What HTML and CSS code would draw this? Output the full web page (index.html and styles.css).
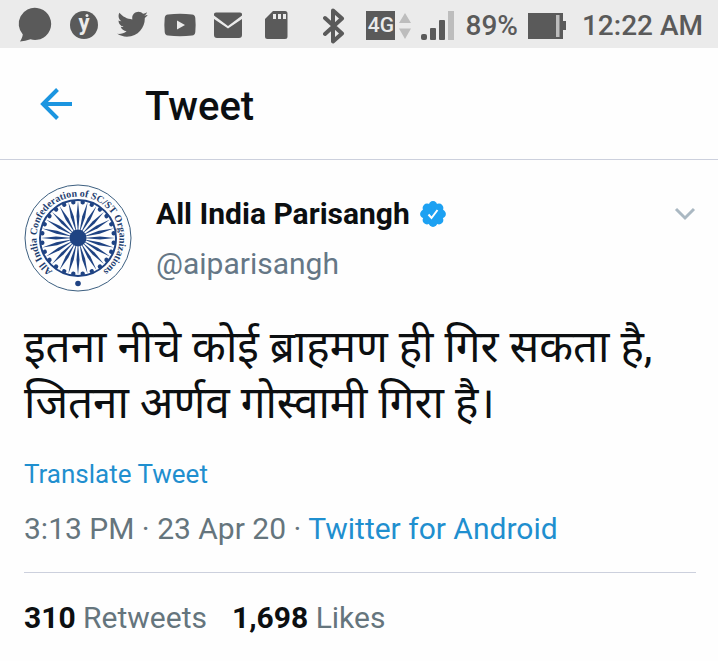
FILE: index.html
```html
<!DOCTYPE html>
<html lang="en">
<head>
  <meta charset="UTF-8">
  <meta name="viewport" content="width=device-width, initial-scale=1.0">
  <title>Tweet</title>
  <link rel="stylesheet" href="styles.css">
</head>
<body>
  <div class="status">
    <div class="notifications">
      <svg class="notif" viewBox="0 0 34 34"><path d="M18 1a16 16 0 1 1-6.500 31.200C8 33.400 4.500 34 1 34.500c1.500-2.300 2.500-4.500 2.800-7A16 16 0 0 1 18 1z"/></svg>
      <svg class="notif" viewBox="0 0 34 34"><circle cx="17" cy="18" r="14"/><text class="yletter" x="17" y="23" text-anchor="middle">y</text><circle class="dot" cx="20" cy="8.500" r="1.500"/></svg>
      <svg class="notif" viewBox="0 0 34 34"><g transform="translate(1 1) scale(1.350)"><path d="M23.643 4.937c-.835.37-1.732.62-2.675.733.962-.576 1.700-1.490 2.048-2.578-.9.534-1.897.922-2.958 1.130-.85-.904-2.060-1.470-3.400-1.470-2.572 0-4.658 2.086-4.658 4.660 0 .364.042.718.120 1.060-3.873-.195-7.304-2.050-9.602-4.868-.4.690-.63 1.490-.63 2.342 0 1.616.823 3.043 2.072 3.878-.764-.025-1.482-.234-2.110-.583v.060c0 2.257 1.605 4.140 3.737 4.568-.392.106-.803.162-1.227.162-.3 0-.593-.028-.877-.082.593 1.850 2.313 3.198 4.352 3.234-1.595 1.250-3.604 1.995-5.786 1.995-.376 0-.747-.022-1.112-.065 2.062 1.323 4.510 2.093 7.140 2.093 8.570 0 13.255-7.098 13.255-13.254 0-.2-.005-.402-.014-.602.910-.658 1.700-1.477 2.323-2.410z"/></g></svg>
      <svg class="notif" viewBox="0 0 34 34"><path fill-rule="evenodd" d="M5 7.500Q17 6.200 29 7.500Q32 7.800 32.300 11Q33 18 32.300 25Q32 28.200 29 28.500Q17 29.800 5 28.500Q2 28.200 1.700 25Q1 18 1.700 11Q2 7.800 5 7.500zM14 13.500v9l8-4.500z"/></svg>
      <svg class="notif" viewBox="0 0 34 34"><path d="M5 5.500h24q2 0 2 1.500v1.500L17 19 3 8.500V7q0-1.500 2-1.500zM3 12l14 9.500L31 12v16q0 3-3 3H6q-3 0-3-3z"/></svg>
      <svg class="notif" viewBox="0 0 34 34"><path fill-rule="evenodd" d="M14 4h12q2.500 0 2.500 2.500v23q0 2.500-2.500 2.500H8.500Q6 32 6 29.500V12zM14 7v5h3V7zM19 7v5h3V7zM24 7v5h3V7z"/></svg>
    </div>
    <div class="system">
      <svg class="bluetooth" viewBox="0 0 22 36"><path d="M2 10l17 15.500-9 8V2.500l9 8L2 26"/></svg>
      <span class="network">4G</span>
      <svg class="traffic" viewBox="0 0 12 26"><path d="M6 0l6 10H0zM0 15.500h12L6 26z"/></svg>
      <svg class="signal" viewBox="0 0 34 30"><rect x="0" y="23" width="6" height="6" rx="2"/><rect x="9" y="17" width="6" height="12" rx="1"/><rect x="18" y="9" width="6" height="20" rx="1"/><rect class="off" x="27" y="0" width="6" height="29"/></svg>
      <span class="percent">89%</span>
      <svg class="battery" viewBox="0 0 38 26"><path d="M0 0h35v8h3v9h-3v9H0z"/><path class="gap" d="M28 2h3.500v22H28z"/></svg>
      <span class="clock">12:22 AM</span>
    </div>
  </div>

  <header class="topbar">
    <button class="back" aria-label="Back">
      <svg viewBox="0 0 32 32"><path d="M32 16H2.500M17.500 1.500L3 16l14.500 14.500"/></svg>
    </button>
    <h1>Tweet</h1>
  </header>

  <main class="tweet">
    <div class="author">
      <svg class="avatar" viewBox="-54 -54 108 108">
        <defs>
          <path id="ring" d="M0 41.500A41.500 41.500 0 0 1 0-41.500A41.500 41.500 0 0 1 0 41.500"/>
          <g id="spoke">
            <path d="M-.3-8L-1.500-22L0-37L1.500-22L.3-8z"/>
            <circle cx="0" cy="-36" r="2.200" transform="rotate(7.500)"/>
          </g>
          <g id="quarter">
            <use href="#spoke"/>
            <use href="#spoke" transform="rotate(15)"/>
            <use href="#spoke" transform="rotate(30)"/>
            <use href="#spoke" transform="rotate(45)"/>
            <use href="#spoke" transform="rotate(60)"/>
            <use href="#spoke" transform="rotate(75)"/>
          </g>
        </defs>
        <circle class="edge" r="53"/>
        <circle class="rim" r="38"/>
        <circle r="8.500"/>
        <use href="#quarter"/>
        <use href="#quarter" transform="rotate(90)"/>
        <use href="#quarter" transform="rotate(180)"/>
        <use href="#quarter" transform="rotate(270)"/>
        <circle cx="0" cy="45.500" r="2.800"/>
        <text class="motto" text-anchor="middle"><textPath href="#ring" startOffset="50%">All India Confederation of SC/ST Organizations</textPath></text>
      </svg>
      <div class="names">
        <div class="name">All India Parisangh
          <svg class="verified" viewBox="0 0 26 26"><g><circle cx="13" cy="13" r="9.500"/><circle cx="13" cy="4.500" r="4.400"/><circle cx="19" cy="7" r="4.400"/><circle cx="21.500" cy="13" r="4.400"/><circle cx="19" cy="19" r="4.400"/><circle cx="13" cy="21.500" r="4.400"/><circle cx="7" cy="19" r="4.400"/><circle cx="4.500" cy="13" r="4.400"/><circle cx="7" cy="7" r="4.400"/></g><path d="M8.500 13.500l3 3.500 6-8"/></svg>
        </div>
        <div class="handle">@aiparisangh</div>
      </div>
      <button class="more" aria-label="More">
        <svg viewBox="0 0 22 14"><path d="M2 2l9 9 9-9"/></svg>
      </button>
    </div>

    <p class="text" lang="hi">इतना नीचे कोई ब्राहमण ही गिर सकता है, जितना अर्णव गोस्वामी गिरा है।</p>

    <a class="translate" href="#">Translate Tweet</a>
    <p class="meta">3:13 PM · 23 Apr 20 · <a href="#">Twitter for Android</a></p>

    <div class="stats">
      <span><b>310</b> Retweets</span>
      <span><b>1,698</b> Likes</span>
    </div>
  </main>
</body>
</html>
```

FILE: styles.css
```css
body {
  margin: 0;
  background: #fefefe;
  color: #0c0f11;
  font-family: Roboto, "Noto Sans", sans-serif;
  font-size: 30px;
}
h1, p {
  margin: 0;
}
a {
  color: #1f8fcf;
  text-decoration: none;
}
button {
  padding: 0;
  border: 0;
  background: none;
}
svg {
  display: block;
  flex: none;
}

/* status bar */
.status {
  display: flex;
  justify-content: space-between;
  align-items: center;
  height: 48px;
  padding: 0 15px 0 19px;
  background: #ebebeb;
  color: #5a5a5a;
  fill: #5a5a5a;
  font-size: 28px;
  font-weight: 500;
  line-height: 48px;
}
.notifications {
  display: flex;
  gap: 14px;
}
.notif {
  width: 34px;
  height: 34px;
  overflow: visible;
}
.yletter {
  fill: #ebebeb;
  font-size: 22px;
  font-weight: 700;
}
.notif .dot {
  fill: #ebebeb;
}
.system {
  display: flex;
  align-items: center;
  gap: 10px;
  padding-top: 3px;
}
.bluetooth {
  width: 22px;
  height: 36px;
  margin-right: 11px;
  fill: none;
  stroke: #5a5a5a;
  stroke-width: 4;
  stroke-linejoin: round;
  stroke-linecap: round;
}
.network {
  width: 29px;
  line-height: 29px;
  margin-right: -6px;
  background: #5a5a5a;
  color: #ebebeb;
  font-size: 21px;
  text-align: center;
}
.traffic {
  width: 12px;
  height: 26px;
  fill: #bdbdbd;
}
.signal {
  width: 34px;
  height: 30px;
}
.signal .off {
  fill: #bdbdbd;
}
.battery {
  width: 38px;
  height: 26px;
}
.battery .gap {
  fill: #bdbdbd;
}
.clock {
  margin-left: 6px;
}

/* top bar */
.topbar {
  display: flex;
  align-items: center;
  gap: 73px;
  height: 111px;
  padding: 0 40px;
  border-bottom: 1px solid #ccd0dd;
}
.back svg {
  width: 32px;
  height: 32px;
  fill: none;
  stroke: #1b95e0;
  stroke-width: 4;
}
.topbar h1 {
  padding-top: 6px;
  font-size: 40px;
  font-weight: 500;
}

/* tweet */
.tweet {
  padding: 24px 22px 24px 24px;
}
.author {
  display: flex;
  align-items: flex-start;
  gap: 24px;
}
.avatar {
  width: 108px;
  height: 108px;
  fill: #1f4383;
}
.avatar .edge {
  fill: none;
  stroke: #3c5f80;
  stroke-width: 1;
}
.avatar .rim {
  fill: none;
  stroke: #1f4383;
  stroke-width: 2;
}
.motto {
  fill: #1f3f70;
  font-family: "Liberation Serif", serif;
  font-size: 10px;
  font-weight: 700;
}
.names {
  flex: 1;
  padding-top: 5px;
  line-height: 50px;
}
.name {
  display: flex;
  align-items: center;
  gap: 10px;
  font-weight: 700;
}
.verified {
  width: 26px;
  height: 26px;
  fill: #1da1f2;
}
.verified path {
  fill: none;
  stroke: #fff;
  stroke-width: 2;
}
.handle {
  color: #657786;
}
.more {
  margin-top: 23px;
}
.more svg {
  width: 22px;
  height: 14px;
  fill: none;
  stroke: #aab8c2;
  stroke-width: 3;
}
.text {
  margin-top: 27px;
  font-size: 44px;
  line-height: 56px;
}
.translate {
  display: block;
  margin-top: 23px;
  font-size: 26px;
  line-height: 40px;
}
.meta {
  margin-top: 15px;
  padding-bottom: 23px;
  border-bottom: 1px solid #ccd0dd;
  color: #65757d;
  line-height: 40px;
}
.stats {
  display: flex;
  gap: 25px;
  margin-top: 25px;
  color: #65757d;
  line-height: 40px;
}
.stats b {
  color: #0c0f11;
}
```
